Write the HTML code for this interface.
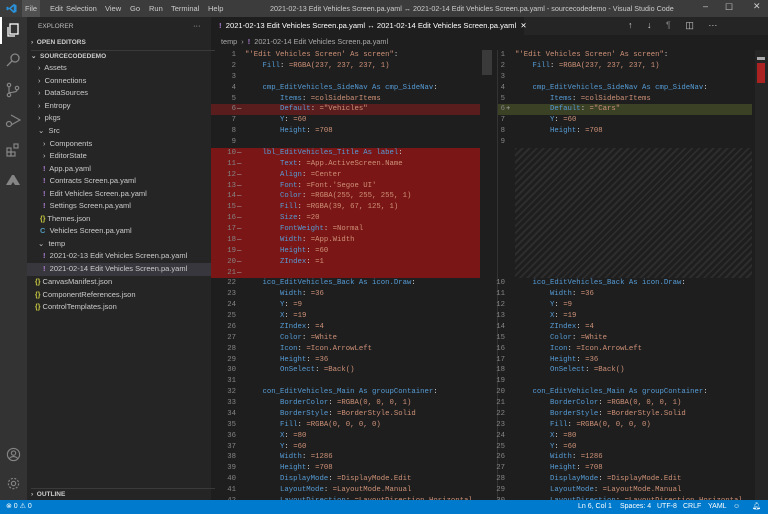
<!DOCTYPE html>
<html><head><meta charset="utf-8"><style>
*{margin:0;padding:0;box-sizing:border-box}
body{width:768px;height:514px;overflow:hidden;background:#1e1e1e;font-family:"Liberation Sans",sans-serif;color:#ccc;position:relative}
.abs{position:absolute}
#title{left:0;top:0;width:768px;height:17px;background:#3c3c3c;font-size:7.5px;color:#ccc}
#title span{position:absolute;top:4px}
#act{left:0;top:17px;width:27px;height:483px;background:#333}
#side{left:27px;top:17px;width:184px;height:483px;background:#252526}
.row{position:absolute;left:0;width:184px;height:12.6px;font-size:7.5px;line-height:12.6px;color:#ccc;white-space:nowrap}
.ex{color:#b180d7;font-weight:bold}
.js{color:#cbcb41;font-weight:bold;font-size:7px}
#tabs{left:211px;top:17px;width:557px;height:18px;background:#252526}
#tab{left:211px;top:17px;width:313px;height:18px;background:#1e1e1e;font-size:7.6px;line-height:18px;color:#fff;padding-left:8px;white-space:nowrap}
#bc{left:211px;top:35px;width:557px;height:14px;font-size:7.3px;line-height:14px;color:#aaa;padding-left:10px;white-space:nowrap}
.code{font-family:"Liberation Mono",monospace;font-size:7.3px;line-height:10.87px;white-space:pre}
.ln{position:absolute;text-align:right;color:#858585}
.k{color:#569cd6}.v{color:#ce9178}.p{color:#d4d4d4}
#status{left:0;top:500px;width:768px;height:14px;background:#007acc;color:#fff;font-size:7px;line-height:14px}
#status span{position:absolute;top:0}
</style></head><body>
<div id="title" class="abs">
<svg class="abs" style="left:6px;top:3px" width="11" height="11" viewBox="0 0 24 24"><path d="M17 2 7 11 3 8 1 9v6l2 1 4-3 10 9 6-3V5z" fill="#2a8fd6"/><path d="M17 7v10l-6-5z" fill="#3c3c3c"/></svg>
<div class="abs" style="left:22px;top:0;width:18px;height:17px;background:#505050"></div>
<span style="left:25px">File</span><span style="left:50px">Edit</span><span style="left:66px">Selection</span><span style="left:105px">View</span><span style="left:130px">Go</span><span style="left:149px">Run</span><span style="left:171px">Terminal</span><span style="left:208px">Help</span>
<span style="left:270px;font-size:7.2px">2021-02-13 Edit Vehicles Screen.pa.yaml ↔ 2021-02-14 Edit Vehicles Screen.pa.yaml - sourcecodedemo - Visual Studio Code</span>
<span style="left:703px;top:1px;font-size:9px">–</span><span style="left:725px;top:2px;font-size:9px">☐</span><span style="left:753px;top:1px;font-size:9px">✕</span>
</div>
<div id="act" class="abs">
<div class="abs" style="left:0;top:0;width:2px;height:27px;background:#fff"></div>
<svg class="abs" style="left:5px;top:5px" width="16" height="16" viewBox="0 0 16 16" fill="none" stroke="#fff" stroke-width="1.3"><rect x="5" y="2" width="8" height="10"/><path d="M3 5v9h7"/></svg>
<svg class="abs" style="left:5px;top:35px" width="16" height="16" viewBox="0 0 16 16" fill="none" stroke="#858585" stroke-width="1.3"><circle cx="10" cy="6" r="4"/><path d="M7 9 2 14"/></svg>
<svg class="abs" style="left:5px;top:65px" width="16" height="16" viewBox="0 0 16 16" fill="none" stroke="#858585" stroke-width="1.2"><circle cx="4" cy="3" r="1.7"/><circle cx="4" cy="13" r="1.7"/><circle cx="12" cy="6" r="1.7"/><path d="M4 5v6M12 8c0 3-8 2-8 3"/></svg>
<svg class="abs" style="left:5px;top:95px" width="16" height="16" viewBox="0 0 16 16" fill="none" stroke="#858585" stroke-width="1.2"><path d="M6 3l9 5-9 5"/><circle cx="4" cy="12" r="2.5"/></svg>
<svg class="abs" style="left:5px;top:125px" width="16" height="16" viewBox="0 0 16 16" fill="none" stroke="#858585" stroke-width="1.2"><rect x="2" y="6" width="4" height="4"/><rect x="6" y="10" width="4" height="4"/><rect x="2" y="10" width="4" height="4"/><rect x="9" y="2" width="4" height="4"/></svg>
<svg class="abs" style="left:5px;top:155px" width="16" height="16" viewBox="0 0 16 16"><path d="M7 3 1 13h5l2-3 2 3h5L9 3z" fill="#858585"/></svg>
<svg class="abs" style="left:6px;top:430px" width="15" height="15" viewBox="0 0 16 16" fill="none" stroke="#858585" stroke-width="1.2"><circle cx="8" cy="8" r="6.5"/><circle cx="8" cy="6.5" r="2.3"/><path d="M3.5 12.5c2-3 7-3 9 0"/></svg>
<svg class="abs" style="left:6px;top:459px" width="15" height="15" viewBox="0 0 16 16" fill="none" stroke="#858585" stroke-width="1.2"><circle cx="8" cy="8" r="2.3"/><circle cx="8" cy="8" r="5.5" stroke-dasharray="2.2 1.6"/></svg>
</div>
<div id="side" class="abs">
<div class="row" style="top:4px;left:11px;font-size:6.5px;color:#bbb">EXPLORER</div>
<div class="row" style="top:3px;left:166px">···</div>
<div class="row" style="top:20px;left:4px;font-size:6.5px;font-weight:bold">›&nbsp; OPEN EDITORS</div>
<div class="row" style="top:33px;left:4px;font-size:6.5px;font-weight:bold;border-top:1px solid #3a3a3a">⌄&nbsp; SOURCECODEDEMO</div>
<div class="row" style="top:45px;left:11px">›&nbsp; Assets</div>
<div class="row" style="top:58px;left:11px">›&nbsp; Connections</div>
<div class="row" style="top:70px;left:11px">›&nbsp; DataSources</div>
<div class="row" style="top:83px;left:11px">›&nbsp; Entropy</div>
<div class="row" style="top:95px;left:11px">›&nbsp; pkgs</div>
<div class="row" style="top:108px;left:11px">⌄&nbsp; Src</div>
<div class="row" style="top:121px;left:16px">›&nbsp; Components</div>
<div class="row" style="top:133px;left:16px">›&nbsp; EditorState</div>
<div class="row" style="top:146px;left:16px"><span class="ex">!</span>&nbsp; App.pa.yaml</div>
<div class="row" style="top:158px;left:16px"><span class="ex">!</span>&nbsp; Contracts Screen.pa.yaml</div>
<div class="row" style="top:171px;left:16px"><span class="ex">!</span>&nbsp; Edit Vehicles Screen.pa.yaml</div>
<div class="row" style="top:183px;left:16px"><span class="ex">!</span>&nbsp; Settings Screen.pa.yaml</div>
<div class="row" style="top:196px;left:13px"><span class="js">{}</span> Themes.json</div>
<div class="row" style="top:208px;left:13px"><span style="color:#519aba;font-weight:bold">C</span>&nbsp; Vehicles Screen.pa.yaml</div>
<div class="row" style="top:221px;left:11px">⌄&nbsp; temp</div>
<div class="row" style="top:233px;left:16px"><span class="ex">!</span>&nbsp; 2021-02-13 Edit Vehicles Screen.pa.yaml</div>
<div class="row" style="top:246px;left:0;padding-left:16px;background:#37373d"><span class="ex">!</span>&nbsp; 2021-02-14 Edit Vehicles Screen.pa.yaml</div>
<div class="row" style="top:259px;left:8px"><span class="js">{}</span> CanvasManifest.json</div>
<div class="row" style="top:272px;left:8px"><span class="js">{}</span> ComponentReferences.json</div>
<div class="row" style="top:284px;left:8px"><span class="js">{}</span> ControlTemplates.json</div>
<div class="row" style="top:471px;left:4px;font-size:6.5px;font-weight:bold;border-top:1px solid #3a3a3a">›&nbsp; OUTLINE</div>
</div>
<div id="tabs" class="abs"></div>
<div id="tab" class="abs"><span class="ex">!</span>&nbsp; 2021-02-13 Edit Vehicles Screen.pa.yaml ↔ 2021-02-14 Edit Vehicles Screen.pa.yaml &nbsp;✕</div>
<div class="abs" style="left:628px;top:20px;font-size:9px;color:#ccc;word-spacing:12px">↑ ↓ <span style="color:#777">¶</span> ◫ ···</div>
<div id="bc" class="abs">temp &nbsp;›&nbsp; <span class="ex">!</span>&nbsp; 2021-02-14 Edit Vehicles Screen.pa.yaml</div>

<!-- left pane backgrounds -->
<div class="abs" style="left:211px;top:104.35px;width:269px;height:10.87px;background:#5a1d1d"></div>
<div class="abs" style="left:211px;top:147.8px;width:269px;height:130.5px;background:#7a1616"></div>
<div class="abs" style="left:482px;top:50px;width:10px;height:25px;background:#3a3a3a"></div>
<!-- right pane backgrounds -->
<div class="abs" style="left:497px;top:104.35px;width:255px;height:10.87px;background:#3a4125"></div>
<div class="abs" style="left:515px;top:147.8px;width:237px;height:130.5px;background:repeating-linear-gradient(-45deg,#1e1e1e 0 3px,#2d2d2d 3px 5px)"></div>
<div class="abs" style="left:755px;top:50px;width:13px;height:450px;background:#252526"></div>
<div class="abs" style="left:757px;top:57px;width:8px;height:3px;background:#aaa"></div>
<div class="abs" style="left:757px;top:63px;width:8px;height:20px;background:#a22"></div>
<div class="abs" style="left:497px;top:50px;width:1px;height:450px;background:#333"></div>

<div class="abs code" style="left:211px;top:50px;width:25px;text-align:right;color:#858585">1
2
3
4
5
6
7
8
9
10
11
12
13
14
15
16
17
18
19
20
21
22
23
24
25
26
27
28
29
30
31
32
33
34
35
36
37
38
39
40
41
42</div>
<div class="abs code" style="left:237px;top:50px;color:#aaa">




—



—
—
—
—
—
—
—
—
—
—
—
—</div>
<div class="abs code" style="left:245px;top:50px"><span class="v">"'Edit Vehicles Screen' As screen"</span><span class="p">:</span>
    <span class="k">Fill</span><span class="p">:</span> <span class="v">=RGBA(237, 237, 237, 1)</span>

    <span class="k">cmp_EditVehicles_SideNav As cmp_SideNav</span><span class="p">:</span>
        <span class="k">Items</span><span class="p">:</span> <span class="v">=colSidebarItems</span>
        <span class="k">Default</span><span class="p">:</span> <span class="v">="Vehicles"</span>
        <span class="k">Y</span><span class="p">:</span> <span class="v">=60</span>
        <span class="k">Height</span><span class="p">:</span> <span class="v">=708</span>

    <span class="k">lbl_EditVehicles_Title As label</span><span class="p">:</span>
        <span class="k">Text</span><span class="p">:</span> <span class="v">=App.ActiveScreen.Name</span>
        <span class="k">Align</span><span class="p">:</span> <span class="v">=Center</span>
        <span class="k">Font</span><span class="p">:</span> <span class="v">=Font.'Segoe UI'</span>
        <span class="k">Color</span><span class="p">:</span> <span class="v">=RGBA(255, 255, 255, 1)</span>
        <span class="k">Fill</span><span class="p">:</span> <span class="v">=RGBA(39, 67, 125, 1)</span>
        <span class="k">Size</span><span class="p">:</span> <span class="v">=20</span>
        <span class="k">FontWeight</span><span class="p">:</span> <span class="v">=Normal</span>
        <span class="k">Width</span><span class="p">:</span> <span class="v">=App.Width</span>
        <span class="k">Height</span><span class="p">:</span> <span class="v">=60</span>
        <span class="k">ZIndex</span><span class="p">:</span> <span class="v">=1</span>

    <span class="k">ico_EditVehicles_Back As icon.Draw</span><span class="p">:</span>
        <span class="k">Width</span><span class="p">:</span> <span class="v">=36</span>
        <span class="k">Y</span><span class="p">:</span> <span class="v">=9</span>
        <span class="k">X</span><span class="p">:</span> <span class="v">=19</span>
        <span class="k">ZIndex</span><span class="p">:</span> <span class="v">=4</span>
        <span class="k">Color</span><span class="p">:</span> <span class="v">=White</span>
        <span class="k">Icon</span><span class="p">:</span> <span class="v">=Icon.ArrowLeft</span>
        <span class="k">Height</span><span class="p">:</span> <span class="v">=36</span>
        <span class="k">OnSelect</span><span class="p">:</span> <span class="v">=Back()</span>

    <span class="k">con_EditVehicles_Main As groupContainer</span><span class="p">:</span>
        <span class="k">BorderColor</span><span class="p">:</span> <span class="v">=RGBA(0, 0, 0, 1)</span>
        <span class="k">BorderStyle</span><span class="p">:</span> <span class="v">=BorderStyle.Solid</span>
        <span class="k">Fill</span><span class="p">:</span> <span class="v">=RGBA(0, 0, 0, 0)</span>
        <span class="k">X</span><span class="p">:</span> <span class="v">=80</span>
        <span class="k">Y</span><span class="p">:</span> <span class="v">=60</span>
        <span class="k">Width</span><span class="p">:</span> <span class="v">=1286</span>
        <span class="k">Height</span><span class="p">:</span> <span class="v">=708</span>
        <span class="k">DisplayMode</span><span class="p">:</span> <span class="v">=DisplayMode.Edit</span>
        <span class="k">LayoutMode</span><span class="p">:</span> <span class="v">=LayoutMode.Manual</span>
        <span class="k">LayoutDirection</span><span class="p">:</span> <span class="v">=LayoutDirection.Horizontal</span></div>

<div class="abs code" style="left:480px;top:50px;width:25px;text-align:right;color:#858585">1
2
3
4
5
6
7
8
9
<span style="visibility:hidden">0</span>











10
11
12
13
14
15
16
17
18
19
20
21
22
23
24
25
26
27
28
29
30</div>
<div class="abs code" style="left:506px;top:50px;color:#aaa">




+</div>
<div class="abs code" style="left:515px;top:50px"><span class="v">"'Edit Vehicles Screen' As screen"</span><span class="p">:</span>
    <span class="k">Fill</span><span class="p">:</span> <span class="v">=RGBA(237, 237, 237, 1)</span>

    <span class="k">cmp_EditVehicles_SideNav As cmp_SideNav</span><span class="p">:</span>
        <span class="k">Items</span><span class="p">:</span> <span class="v">=colSidebarItems</span>
        <span class="k">Default</span><span class="p">:</span> <span class="v">="Cars"</span>
        <span class="k">Y</span><span class="p">:</span> <span class="v">=60</span>
        <span class="k">Height</span><span class="p">:</span> <span class="v">=708</span>













    <span class="k">ico_EditVehicles_Back As icon.Draw</span><span class="p">:</span>
        <span class="k">Width</span><span class="p">:</span> <span class="v">=36</span>
        <span class="k">Y</span><span class="p">:</span> <span class="v">=9</span>
        <span class="k">X</span><span class="p">:</span> <span class="v">=19</span>
        <span class="k">ZIndex</span><span class="p">:</span> <span class="v">=4</span>
        <span class="k">Color</span><span class="p">:</span> <span class="v">=White</span>
        <span class="k">Icon</span><span class="p">:</span> <span class="v">=Icon.ArrowLeft</span>
        <span class="k">Height</span><span class="p">:</span> <span class="v">=36</span>
        <span class="k">OnSelect</span><span class="p">:</span> <span class="v">=Back()</span>

    <span class="k">con_EditVehicles_Main As groupContainer</span><span class="p">:</span>
        <span class="k">BorderColor</span><span class="p">:</span> <span class="v">=RGBA(0, 0, 0, 1)</span>
        <span class="k">BorderStyle</span><span class="p">:</span> <span class="v">=BorderStyle.Solid</span>
        <span class="k">Fill</span><span class="p">:</span> <span class="v">=RGBA(0, 0, 0, 0)</span>
        <span class="k">X</span><span class="p">:</span> <span class="v">=80</span>
        <span class="k">Y</span><span class="p">:</span> <span class="v">=60</span>
        <span class="k">Width</span><span class="p">:</span> <span class="v">=1286</span>
        <span class="k">Height</span><span class="p">:</span> <span class="v">=708</span>
        <span class="k">DisplayMode</span><span class="p">:</span> <span class="v">=DisplayMode.Edit</span>
        <span class="k">LayoutMode</span><span class="p">:</span> <span class="v">=LayoutMode.Manual</span>
        <span class="k">LayoutDirection</span><span class="p">:</span> <span class="v">=LayoutDirection.Horizontal</span></div>

<div id="status" class="abs">
<span style="left:6px">⊗ 0 ⚠ 0</span>
<span style="left:578px">Ln 6, Col 1</span><span style="left:620px">Spaces: 4</span><span style="left:657px">UTF-8</span><span style="left:683px">CRLF</span><span style="left:708px">YAML</span><span style="left:733px">☺</span><span style="left:752px">🔔︎</span>
</div>
</body></html>
